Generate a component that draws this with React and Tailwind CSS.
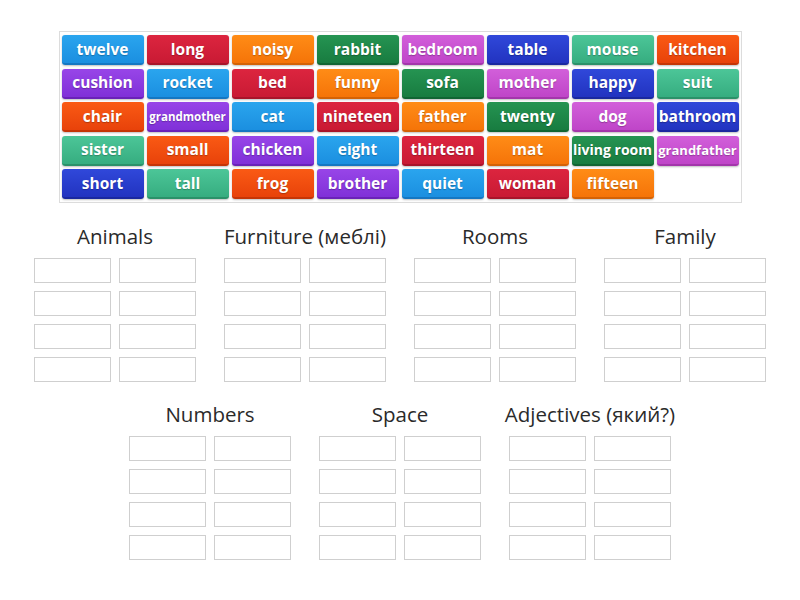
const COLORS = {
  blue: "bg-gradient-to-b from-[#2aa5ee] to-[#1b8fe0] border-b-[#1577c2]",
  red: "bg-gradient-to-b from-[#dc253f] to-[#c91a34] border-b-[#a8142a]",
  orange: "bg-gradient-to-b from-[#ff8c16] to-[#f57408] border-b-[#d46205]",
  darkgreen: "bg-gradient-to-b from-[#259452] to-[#187c40] border-b-[#116533]",
  magenta: "bg-gradient-to-b from-[#d25fda] to-[#bf45c8] border-b-[#a336ab]",
  darkblue: "bg-gradient-to-b from-[#3048da] to-[#2233c0] border-b-[#1a289f]",
  mint: "bg-gradient-to-b from-[#4cc698] to-[#36ad80] border-b-[#2b9169]",
  orangered: "bg-gradient-to-b from-[#fa5a14] to-[#e8420a] border-b-[#c53506]",
  purple: "bg-gradient-to-b from-[#9845e8] to-[#8030d8] border-b-[#6a22b8]",
};

const ORDER = ["blue", "red", "orange", "darkgreen", "magenta", "darkblue", "mint", "orangered", "purple"];

const WORDS = [
  "twelve", "long", "noisy", "rabbit", "bedroom", "table", "mouse", "kitchen",
  "cushion", "rocket", "bed", "funny", "sofa", "mother", "happy", "suit",
  "chair", "grandmother", "cat", "nineteen", "father", "twenty", "dog", "bathroom",
  "sister", "small", "chicken", "eight", "thirteen", "mat", "living room", "grandfather",
  "short", "tall", "frog", "brother", "quiet", "woman", "fifteen",
];

// long words get squeezed to fit the tile
const SIZES = {
  grandmother: "text-[11.5px]",
  grandfather: "text-[13px]",
  "living room": "text-[14px]",
};

const GROUPS_TOP = ["Animals", "Furniture (меблі)", "Rooms", "Family"];
const GROUPS_BOTTOM = ["Numbers", "Space", "Adjectives (який?)"];

function Tile({ word, color }) {
  return (
    <div
      className={`h-[30px] pt-[1px] rounded-[3px] border-b-2 flex items-center justify-center text-white font-bold leading-none whitespace-nowrap shadow-[0_1px_2px_rgba(0,0,0,0.25)] [text-shadow:0_1px_1px_rgba(0,0,0,0.25)] ${COLORS[color]} ${SIZES[word] || "text-[15.5px]"}`}
    >
      {word}
    </div>
  );
}

function Group({ title }) {
  return (
    <div className="w-[162px]">
      <div className="flex justify-center">
        <h2 className="whitespace-nowrap text-[20.5px] leading-[28px] text-[#2a2a2a]">{title}</h2>
      </div>
      <div className="mt-[8px] grid grid-cols-2 gap-x-[8px] gap-y-[8px]">
        {Array.from({ length: 8 }).map((_, i) => (
          <div key={i} className="h-[25px] border border-[#cfcfcf] bg-white" />
        ))}
      </div>
    </div>
  );
}

export default function App() {
  return (
    <div className="w-[800px] h-[600px] bg-white overflow-hidden" style={{ fontFamily: '"Open Sans", "Noto Sans", sans-serif' }}>
      <div className="mt-[31px] mx-auto w-[683px] border border-[#dcdcdc] px-[2px] py-[3px] grid grid-cols-8 gap-x-[3px] gap-y-[3.5px]">
        {WORDS.map((w, i) => (
          <Tile key={w} word={w} color={ORDER[i % ORDER.length]} />
        ))}
      </div>

      <div className="mt-[19px] flex flex-col items-center gap-y-[18px]">
        <div className="flex gap-x-[28px]">
          {GROUPS_TOP.map((g) => (
            <Group key={g} title={g} />
          ))}
        </div>
        <div className="flex gap-x-[28px]">
          {GROUPS_BOTTOM.map((g) => (
            <Group key={g} title={g} />
          ))}
        </div>
      </div>
    </div>
  );
}
